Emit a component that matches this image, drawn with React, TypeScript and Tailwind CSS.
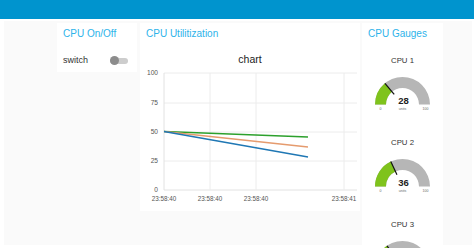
import { memo } from "react";

const font = { fontFamily: '"Liberation Sans", Arial, sans-serif' };

const series = [
  { color: "#2ca02c", end: 72 },
  { color: "#e59b6e", end: 82 },
  { color: "#1f77b4", end: 92 },
];

const Chart = () => {
  const rows = [
    { y: 8, label: "100" },
    { y: 38, label: "75" },
    { y: 67, label: "50" },
    { y: 96, label: "25" },
    { y: 125, label: "0" },
  ];
  const cols = [
    { x: 24, label: "23:58:40" },
    { x: 70, label: "23:58:40" },
    { x: 116, label: "23:58:40" },
    { x: 204, label: "23:58:41" },
  ];
  return (
    <svg width="220" height="146" className="block">
      {rows.map((r) => (
        <g key={r.label}>
          <line x1={24} x2={217} y1={r.y} y2={r.y} stroke={r.label === "0" ? "#e2e2e2" : "#ececec"} strokeWidth="1" />
          <text x={18} y={r.y + 2.2} fontSize="6.6" fill="#555" textAnchor="end" style={font}>
            {r.label}
          </text>
        </g>
      ))}
      {cols.map((c, i) => (
        <g key={i}>
          <line x1={c.x} x2={c.x} y1={8} y2={125} stroke={i === 0 ? "#e2e2e2" : "#ececec"} strokeWidth="1" />
          <text x={c.x} y={136} fontSize="6.3" fill="#555" textAnchor="middle" style={font}>
            {c.label}
          </text>
        </g>
      ))}
      {series.map((s) => (
        <line key={s.color} x1={24} y1={66.5} x2={168} y2={s.end} stroke={s.color} strokeWidth="1.5" />
      ))}
    </svg>
  );
};

const Gauge = ({ name, value, labels = true }: { name: string; value: number; labels?: boolean }) => {
  const cx = 40.5;
  const cy = 37.5;
  const ro = 27.5;
  const ri = 16.5;
  const a = Math.PI - (value / 100) * Math.PI;
  const px = (r: number) => cx + r * Math.cos(a);
  const py = (r: number) => cy - r * Math.sin(a);
  const full = `M ${cx - ro} ${cy} A ${ro} ${ro} 0 0 1 ${cx + ro} ${cy} L ${cx + ri} ${cy} A ${ri} ${ri} 0 0 0 ${cx - ri} ${cy} Z`;
  const part = `M ${cx - ro} ${cy} A ${ro} ${ro} 0 0 1 ${px(ro)} ${py(ro)} L ${px(ri)} ${py(ri)} A ${ri} ${ri} 0 0 0 ${cx - ri} ${cy} Z`;
  return (
    <div className="h-[82px] flex flex-col items-center">
      <div className="h-[13px] leading-[13px] text-[7.8px] text-[#333]">{name}</div>
      <svg width="81" height="69" className="block">
        <path d={full} fill="#b6b6b6" />
        <path d={part} fill="#7fc31c" />
        <line x1={px(ro)} y1={py(ro)} x2={px(13)} y2={py(13)} stroke="#111" strokeWidth="1.2" />
        {labels && (
          <>
            <text x={cx + 1} y={cy - 0.5} fontSize="9.5" fontWeight="bold" fill="#222" textAnchor="middle" style={font}>
              {value}
            </text>
            <text x={cx - 22} y={cy + 5} fontSize="3.5" fill="#666" textAnchor="middle" style={font}>0</text>
            <text x={cx} y={cy + 5.5} fontSize="3.5" fill="#666" textAnchor="middle" style={font}>units</text>
            <text x={cx + 23} y={cy + 5} fontSize="3.5" fill="#666" textAnchor="middle" style={font}>100</text>
          </>
        )}
      </svg>
    </div>
  );
};

const Title = ({ children }: { children: string }) => (
  <div className="h-[31px] pt-[4px] px-[6px] leading-[13px] text-[10px] text-[#2db3ea]">{children}</div>
);

const App = memo(() => {
  return (
    <div className="w-[474px] h-[248px] bg-white overflow-hidden" style={font}>
      <div className="h-[19px] bg-[#0094ce]" />
      <div className="mt-[2px] ml-[4px] w-[468px] h-[224px] bg-[#fafafa] flex items-start pl-[53px] pt-[2px]">
        {/* switch group */}
        <div className="w-[80px] h-[49px] bg-white">
          <Title>CPU On/Off</Title>
          <div className="h-[13px] px-[6px] flex items-center justify-between">
            <span className="text-[9px] text-[#333]">switch</span>
            <div className="relative w-[18px] h-[9px] mr-[3px] flex items-center">
              <div className="w-full h-[6px] rounded-full bg-[#cdcdcd]" />
              <div className="absolute left-0 top-0 w-[9px] h-[9px] rounded-full bg-[#8c8c8c]" />
            </div>
          </div>
        </div>

        {/* chart group */}
        <div className="ml-[3px] w-[220px] h-[188px] bg-white">
          <Title>CPU Utilitization</Title>
          <div className="h-[11px] leading-[11px] text-center text-[10.5px] text-[#222]">chart</div>
          <Chart />
        </div>

        {/* gauges group */}
        <div className="ml-[2px] w-[81px] h-[260px] bg-white overflow-hidden">
          <Title>CPU Gauges</Title>
          <Gauge name="CPU 1" value={28} />
          <Gauge name="CPU 2" value={36} />
          <Gauge name="CPU 3" value={31} labels={false} />
        </div>
      </div>
    </div>
  );
});

App.displayName = "App";

export default App;
